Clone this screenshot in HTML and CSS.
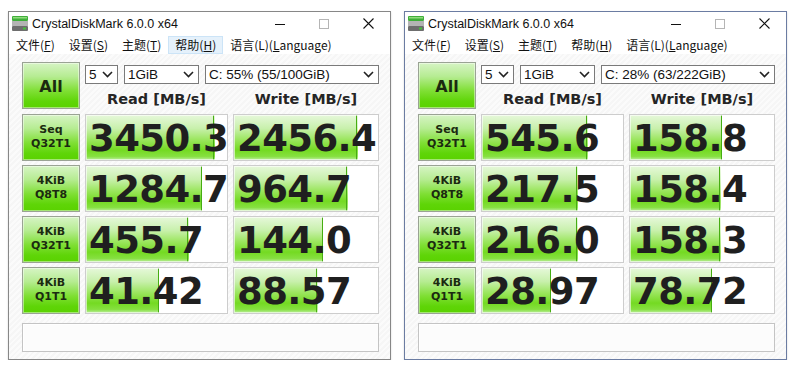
FILE: index.html
```html
<!DOCTYPE html>
<html lang="zh-CN">
<head>
<meta charset="utf-8">
<title>CrystalDiskMark</title>
<link rel="stylesheet" href="styles.css">
</head>
<body>
<div class="page">

  <div class="win win-a">
    <div class="titlebar">
      <svg class="app-icon" viewBox="0 0 16 15" width="16" height="15">
        <rect x="0" y="0" width="16" height="5" rx="1" fill="#3fae3a"/>
        <rect x="1" y="1" width="14" height="1.5" fill="#8fdc7c"/>
        <rect x="0" y="5" width="16" height="5" fill="#b4b4b4"/>
        <rect x="0" y="10" width="16" height="5" rx="1" fill="#6e6e6e"/>
        <rect x="11" y="11.5" width="3" height="2" fill="#44c23a"/>
      </svg>
      <span class="title">CrystalDiskMark 6.0.0 x64</span>
      <div class="caption">
        <span class="cb"><svg width="10" height="10" viewBox="0 0 10 10"><line x1="0" y1="5.5" x2="10" y2="5.5" stroke="#111" stroke-width="1"/></svg></span>
        <span class="cb"><svg width="10" height="10" viewBox="0 0 10 10"><rect x="0.5" y="0.5" width="9" height="9" fill="none" stroke="#b5b5b5" stroke-width="1"/></svg></span>
        <span class="cb"><svg width="11" height="11" viewBox="0 0 11 11"><path d="M0.5 0.5 L10.5 10.5 M10.5 0.5 L0.5 10.5" stroke="#111" stroke-width="1.1" fill="none"/></svg></span>
      </div>
    </div>
    <div class="menubar">
      <span class="mi">文件(<u>F</u>)</span>
      <span class="mi">设置(<u>S</u>)</span>
      <span class="mi">主题(<u>T</u>)</span>
      <span class="mi mi-hot">帮助(<u>H</u>)</span>
      <span class="mi">语言(L)(<u>L</u>anguage)</span>
    </div>
    <div class="body">
      <div class="grid">
        <div class="btn btn-all">All</div>
        <div class="top">
          <div class="selects">
            <div class="sel sel-n"><span>5</span><svg class="chev" width="11" height="7" viewBox="0 0 11 7"><polyline points="1,1 5.5,5.5 10,1" fill="none" stroke="#222" stroke-width="1.6"/></svg></div>
            <div class="sel sel-s"><span>1GiB</span><svg class="chev" width="11" height="7" viewBox="0 0 11 7"><polyline points="1,1 5.5,5.5 10,1" fill="none" stroke="#222" stroke-width="1.6"/></svg></div>
            <div class="sel sel-d"><span>C: 55% (55/100GiB)</span><svg class="chev" width="11" height="7" viewBox="0 0 11 7"><polyline points="1,1 5.5,5.5 10,1" fill="none" stroke="#222" stroke-width="1.6"/></svg></div>
          </div>
          <div class="heads"><span>Read [MB/s]</span><span>Write [MB/s]</span></div>
        </div>

        <div class="btn lbl">Seq<br>Q32T1</div>
        <div class="val" style="--p:91.5%"><span>3450.3</span></div>
        <div class="val" style="--p:86%"><span>2456.4</span></div>

        <div class="btn lbl">4KiB<br>Q8T8</div>
        <div class="val" style="--p:82.5%"><span>1284.7</span></div>
        <div class="val" style="--p:79%"><span>964.7</span></div>

        <div class="btn lbl">4KiB<br>Q32T1</div>
        <div class="val" style="--p:73%"><span>455.7</span></div>
        <div class="val" style="--p:62%"><span>144.0</span></div>

        <div class="btn lbl">4KiB<br>Q1T1</div>
        <div class="val" style="--p:52%"><span>41.42</span></div>
        <div class="val" style="--p:58%"><span>88.57</span></div>
      </div>
      <div class="msg"></div>
    </div>
  </div>

  <div class="win win-b">
    <div class="titlebar">
      <svg class="app-icon" viewBox="0 0 16 15" width="16" height="15">
        <rect x="0" y="0" width="16" height="5" rx="1" fill="#3fae3a"/>
        <rect x="1" y="1" width="14" height="1.5" fill="#8fdc7c"/>
        <rect x="0" y="5" width="16" height="5" fill="#b4b4b4"/>
        <rect x="0" y="10" width="16" height="5" rx="1" fill="#6e6e6e"/>
        <rect x="11" y="11.5" width="3" height="2" fill="#44c23a"/>
      </svg>
      <span class="title">CrystalDiskMark 6.0.0 x64</span>
      <div class="caption">
        <span class="cb"><svg width="10" height="10" viewBox="0 0 10 10"><line x1="0" y1="5.5" x2="10" y2="5.5" stroke="#111" stroke-width="1"/></svg></span>
        <span class="cb"><svg width="10" height="10" viewBox="0 0 10 10"><rect x="0.5" y="0.5" width="9" height="9" fill="none" stroke="#b5b5b5" stroke-width="1"/></svg></span>
        <span class="cb"><svg width="11" height="11" viewBox="0 0 11 11"><path d="M0.5 0.5 L10.5 10.5 M10.5 0.5 L0.5 10.5" stroke="#111" stroke-width="1.1" fill="none"/></svg></span>
      </div>
    </div>
    <div class="menubar">
      <span class="mi">文件(<u>F</u>)</span>
      <span class="mi">设置(<u>S</u>)</span>
      <span class="mi">主题(<u>T</u>)</span>
      <span class="mi">帮助(<u>H</u>)</span>
      <span class="mi">语言(L)(<u>L</u>anguage)</span>
    </div>
    <div class="body">
      <div class="grid">
        <div class="btn btn-all">All</div>
        <div class="top">
          <div class="selects">
            <div class="sel sel-n"><span>5</span><svg class="chev" width="11" height="7" viewBox="0 0 11 7"><polyline points="1,1 5.5,5.5 10,1" fill="none" stroke="#222" stroke-width="1.6"/></svg></div>
            <div class="sel sel-s"><span>1GiB</span><svg class="chev" width="11" height="7" viewBox="0 0 11 7"><polyline points="1,1 5.5,5.5 10,1" fill="none" stroke="#222" stroke-width="1.6"/></svg></div>
            <div class="sel sel-d"><span>C: 28% (63/222GiB)</span><svg class="chev" width="11" height="7" viewBox="0 0 11 7"><polyline points="1,1 5.5,5.5 10,1" fill="none" stroke="#222" stroke-width="1.6"/></svg></div>
          </div>
          <div class="heads"><span>Read [MB/s]</span><span>Write [MB/s]</span></div>
        </div>

        <div class="btn lbl">Seq<br>Q32T1</div>
        <div class="val" style="--p:75%"><span>545.6</span></div>
        <div class="val" style="--p:64%"><span>158.8</span></div>

        <div class="btn lbl">4KiB<br>Q8T8</div>
        <div class="val" style="--p:68%"><span>217.5</span></div>
        <div class="val" style="--p:63%"><span>158.4</span></div>

        <div class="btn lbl">4KiB<br>Q32T1</div>
        <div class="val" style="--p:68%"><span>216.0</span></div>
        <div class="val" style="--p:63%"><span>158.3</span></div>

        <div class="btn lbl">4KiB<br>Q1T1</div>
        <div class="val" style="--p:49%"><span>28.97</span></div>
        <div class="val" style="--p:57%"><span>78.72</span></div>
      </div>
      <div class="msg"></div>
    </div>
  </div>

</div>
</body>
</html>
```

FILE: styles.css
```css
html, body {
  margin: 0;
  padding: 0;
  background: #ffffff;
}

.page {
  display: flex;
  gap: 13px;
  padding: 11px 0 0 8px;
  font-family: "Liberation Sans", "Noto Sans CJK SC", sans-serif;
  color: #000;
}

.win {
  width: 383px;
  box-sizing: border-box;
  border: 1px solid #878787;
  background: #ffffff;
  display: flex;
  flex-direction: column;
  box-shadow: 0 1px 2px rgba(0, 0, 0, 0.15);
}

.win-b {
  border-color: #6b7ca2;
}

.titlebar {
  height: 23px;
  display: flex;
  align-items: center;
}

.app-icon {
  margin-left: 3px;
  flex: none;
}

.title {
  margin-left: 4px;
  font-family: "Liberation Sans", sans-serif;
  font-size: 12.5px;
  color: #111;
}

.caption {
  margin-left: auto;
  display: flex;
}

.cb {
  width: 44px;
  height: 23px;
  display: flex;
  align-items: center;
  justify-content: center;
}

.menubar {
  height: 19px;
  display: flex;
  align-items: center;
}

.mi {
  box-sizing: border-box;
  height: 18px;
  line-height: 16px;
  padding: 0 6px;
  border: 1px solid transparent;
  font-family: "Noto Sans CJK SC", sans-serif;
  font-size: 12px;
  color: #111;
  white-space: nowrap;
}

.mi u {
  text-decoration-thickness: 1px;
  text-underline-offset: 1px;
}

.mi-hot {
  background: #e5f1fb;
  border-color: #cce4f7;
}

.body {
  flex: 1;
  padding: 8px 11px 7px 13px;
  background:
    repeating-linear-gradient(-45deg, #f6f6f6 0 2px, #fbfbfb 2px 4px);
}

.grid {
  display: grid;
  grid-template-columns: 58px 143px 146px;
  grid-template-rows: 48px repeat(4, 47px);
  column-gap: 5px;
  row-gap: 4px;
}

.btn {
  box-sizing: border-box;
  border: 1px solid #9aa394;
  background: linear-gradient(to bottom, #d6f4c4 0%, #b6ec92 30%, #7fdf34 62%, #5fd508 85%, #5ad200 100%);
  box-shadow: inset 0 0 0 1px rgba(255, 255, 255, 0.45);
  display: flex;
  flex-direction: column;
  align-items: center;
  justify-content: center;
  font-family: "DejaVu Sans", sans-serif;
  font-weight: bold;
  color: #1b2a10;
  text-align: center;
}

.btn-all {
  height: 47px;
  align-self: start;
  font-size: 16px;
  padding-top: 2px;
}

.lbl {
  font-size: 11px;
  line-height: 13.5px;
  padding-bottom: 2px;
}

.top {
  grid-column: 2 / 4;
  display: flex;
  flex-direction: column;
}

.selects {
  margin-top: 3px;
  display: flex;
  gap: 6px;
}

.sel {
  box-sizing: border-box;
  height: 19px;
  border: 1px solid #7a7a7a;
  background: #ffffff;
  display: flex;
  align-items: center;
  padding: 0 4px 0 3px;
  font-family: "Liberation Sans", sans-serif;
  font-size: 13.5px;
  color: #111;
  white-space: nowrap;
}

.sel-n { width: 33px; }
.sel-s { width: 75px; }
.sel-d { width: 174px; }

.chev {
  margin-left: auto;
  flex: none;
}

.heads {
  flex: 1;
  display: grid;
  grid-template-columns: 143px 146px;
  column-gap: 5px;
  align-items: center;
  justify-items: center;
  padding-top: 3px;
  font-family: "DejaVu Sans", sans-serif;
  font-weight: bold;
  font-size: 14.5px;
  color: #252525;
}

.val {
  --p: 50%;
  box-sizing: border-box;
  border: 1px solid #cdcdcd;
  display: flex;
  align-items: center;
  overflow: hidden;
  background:
    linear-gradient(#46ad12, #46ad12) no-repeat calc(var(--p) - 1px) 0 / 1px 100%,
    linear-gradient(to bottom, #e6f8da 0%, #c8f0ac 30%, #9be65e 55%, #74da22 78%, #86e040 92%, #bdeea0 100%) no-repeat 0 0 / var(--p) 100%,
    #ffffff;
  box-shadow: inset 0 0 0 1px rgba(255, 255, 255, 0.6);
}

.val span {
  padding-left: 3px;
  font-family: "DejaVu Sans", sans-serif;
  font-weight: bold;
  font-size: 37px;
  line-height: 1;
  letter-spacing: -0.6px;
  color: #1f1f1f;
  white-space: nowrap;
  position: relative;
  top: 1px;
}

.msg {
  margin-top: 9px;
  height: 29px;
  box-sizing: border-box;
  border: 1px solid #c4c4c4;
  background: #fcfcfc;
  box-shadow: inset 1px 1px 0 #ffffff;
}
```
